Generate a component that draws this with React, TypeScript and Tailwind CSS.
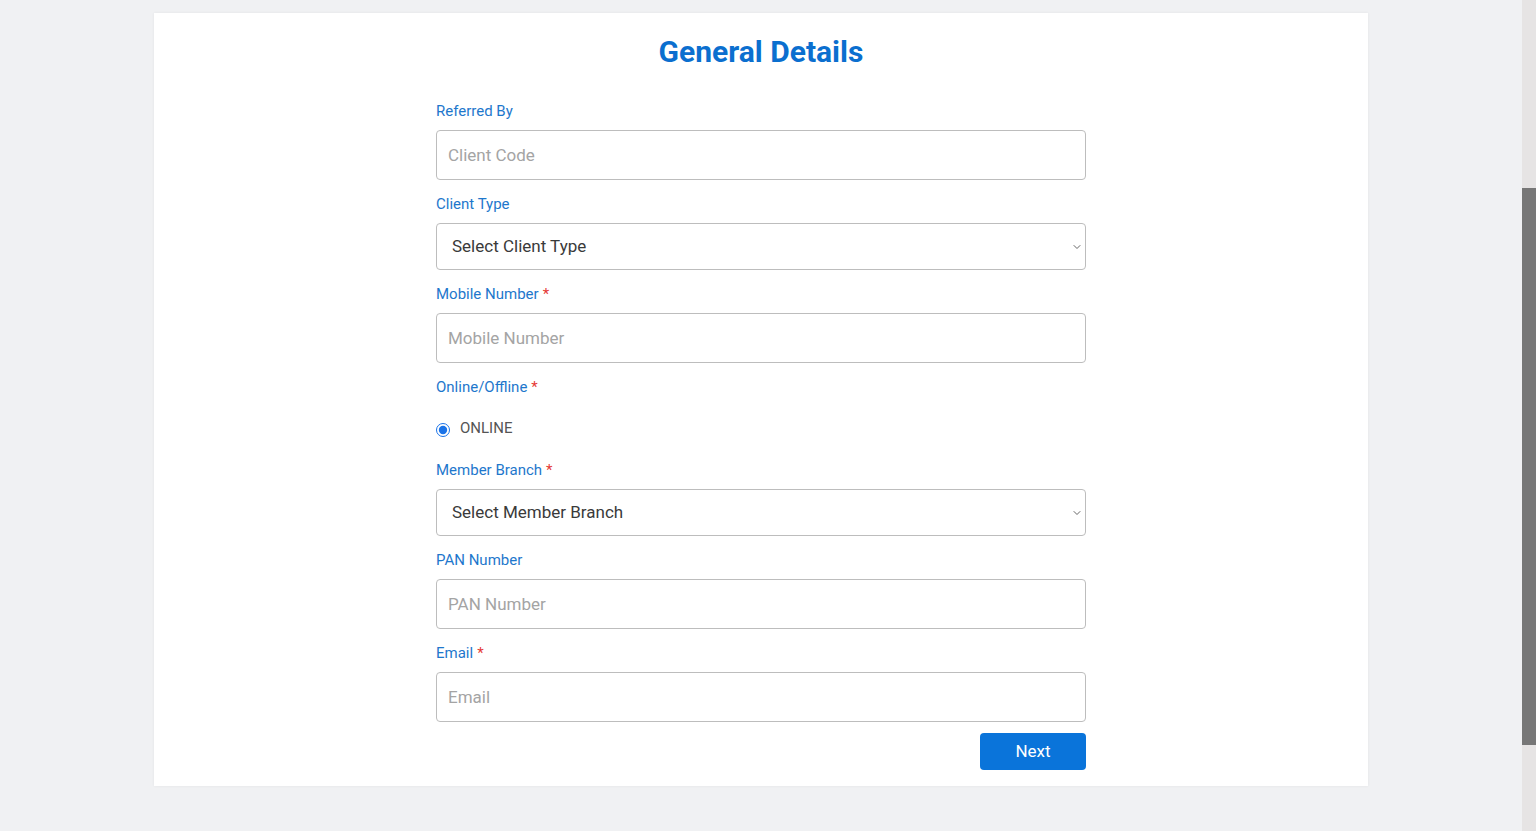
import { ChevronDown } from 'lucide-react';

function Label({ text, required }: { text: string; required?: boolean }) {
  return (
    <div className="text-[15px] leading-[22px] text-[#1e77cc]">
      {text}
      {required && <span className="ml-1 text-[#e53935]">*</span>}
    </div>
  );
}

function TextField({ placeholder }: { placeholder: string }) {
  return (
    <input
      placeholder={placeholder}
      className="mt-2 block h-[50px] w-full rounded-[4px] border border-[#bdbdbd] bg-white px-[11px] text-[17px] text-[#333] outline-none placeholder:text-[#a4a4a4]"
    />
  );
}

function SelectField({ placeholder }: { placeholder: string }) {
  return (
    <div className="relative mt-2">
      <select
        defaultValue=""
        className="block h-[47px] w-full appearance-none rounded-[4px] border border-[#bdbdbd] bg-white pl-[15px] pr-8 text-[17px] text-[#3a3a3a] outline-none"
      >
        <option value="">{placeholder}</option>
      </select>
      <ChevronDown className="pointer-events-none absolute right-[3px] top-1/2 h-[12px] w-[12px] -translate-y-1/2 text-[#666]" strokeWidth={2} />
    </div>
  );
}

export default function App() {
  return (
    <div className="flex h-[831px] overflow-hidden bg-[#f0f1f3]" style={{ fontFamily: 'Roboto, "Liberation Sans", sans-serif' }}>
      {/* page */}
      <div className="flex-1 px-[154px] pt-[13px]">
        <div className="bg-white pb-4 pt-[21px] shadow-[0_0_3px_rgba(0,0,0,0.06)]">
          <h1 className="text-center text-[30px] font-bold leading-[36px] text-[#0b6fcf]">General Details</h1>

          <div className="mx-auto mt-[30px] w-[650px]">
            <Label text="Referred By" />
            <TextField placeholder="Client Code" />

            <div className="mt-[13px]">
              <Label text="Client Type" />
              <SelectField placeholder="Select Client Type" />
            </div>

            <div className="mt-[13px]">
              <Label text="Mobile Number" required />
              <TextField placeholder="Mobile Number" />
            </div>

            <div className="mt-[13px]">
              <Label text="Online/Offline" required />
              <label className="mt-[18px] flex h-[24px] items-center gap-[10px]">
                <input type="radio" name="mode" defaultChecked className="m-0 mt-[3px] h-[14px] w-[14px] accent-[#1a73e8]" />
                <span className="text-[15px] text-[#555]">ONLINE</span>
              </label>
            </div>

            <div className="mt-[19px]">
              <Label text="Member Branch" required />
              <SelectField placeholder="Select Member Branch" />
            </div>

            <div className="mt-[13px]">
              <Label text="PAN Number" />
              <TextField placeholder="PAN Number" />
            </div>

            <div className="mt-[13px]">
              <Label text="Email" required />
              <TextField placeholder="Email" />
            </div>

            <div className="mt-[11px] flex justify-end">
              <button className="h-[37px] w-[106px] rounded-[4px] bg-[#0a74da] text-[17px] text-white">Next</button>
            </div>
          </div>
        </div>
      </div>

      {/* scrollbar */}
      <div className="w-[14px] bg-[#e6e4e4] pt-[188px]">
        <div className="h-[557px] bg-[#777777]" />
      </div>
    </div>
  );
}
